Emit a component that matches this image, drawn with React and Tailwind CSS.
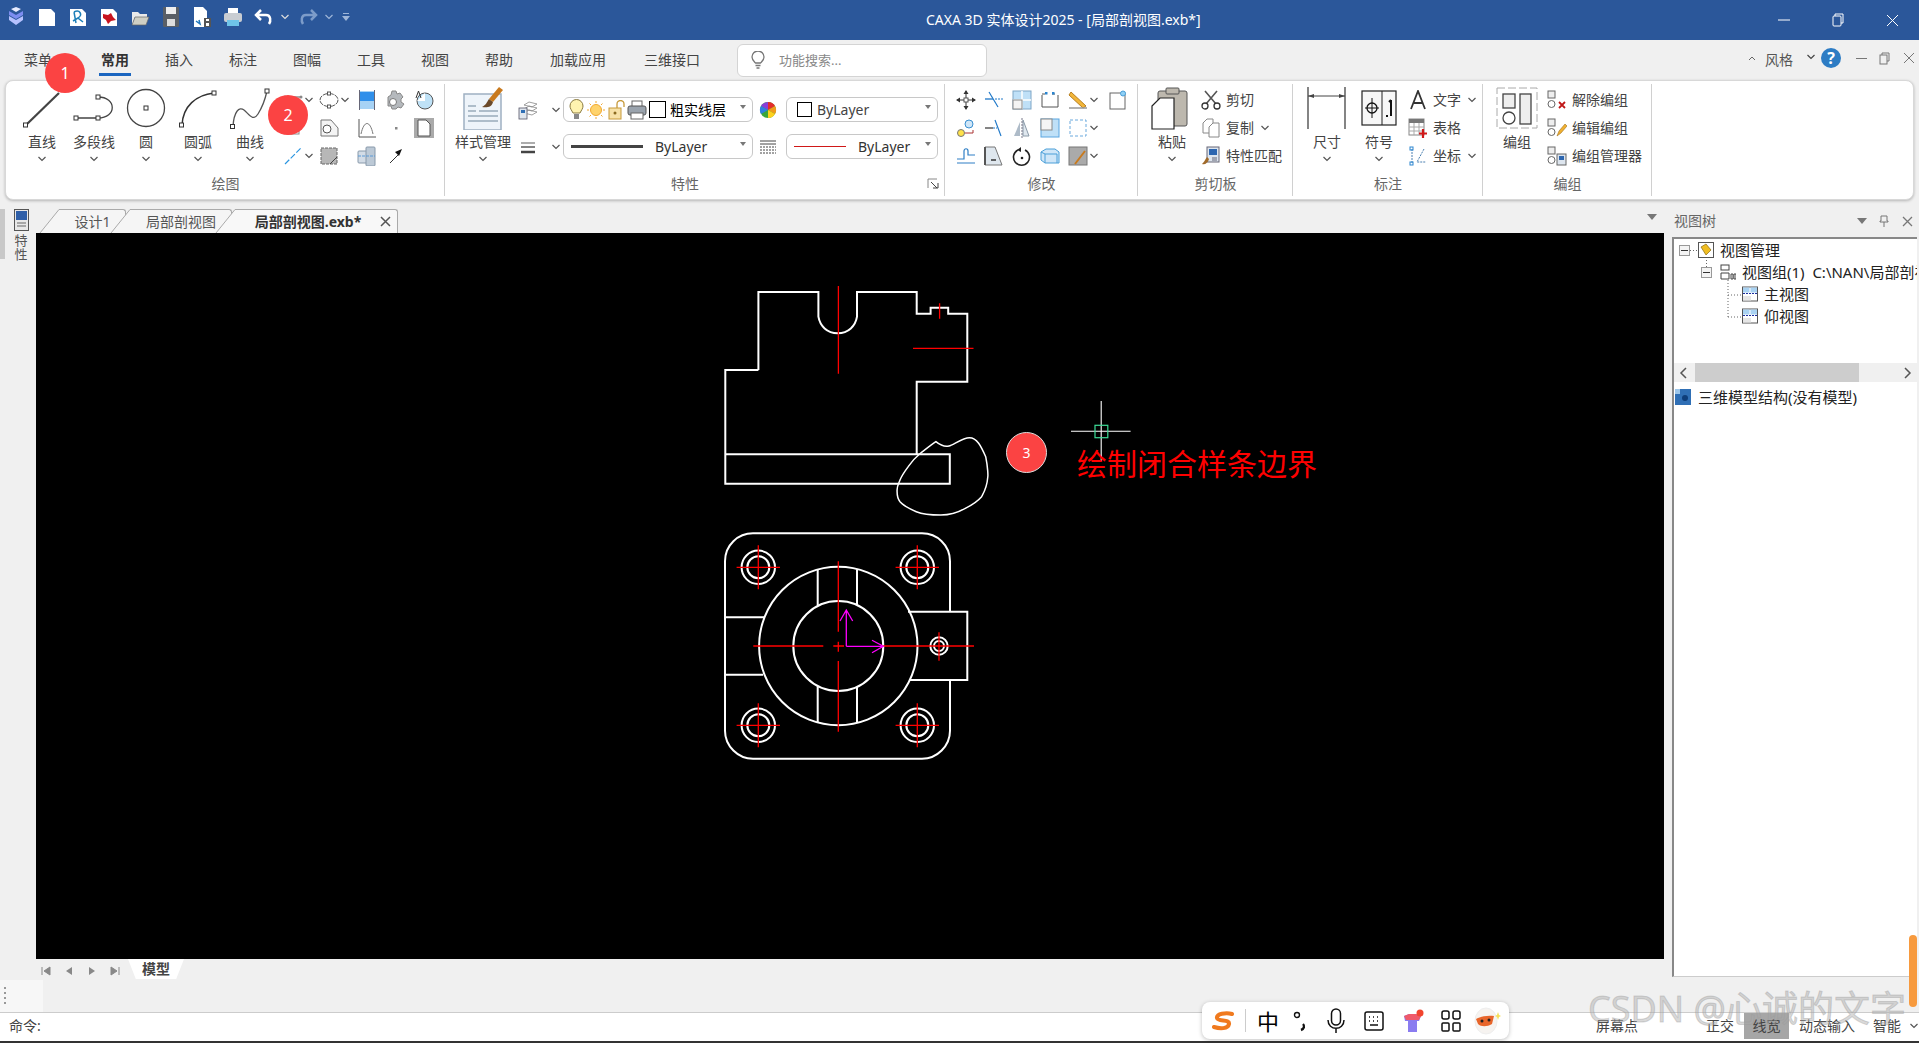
const Ic = ({ w = 20, h = 20, children }) => (
  <svg width={w} height={h} viewBox={`0 0 ${w} ${h}`} fill="none" className="shrink-0">{children}</svg>
)

const Chev = ({ c = '#555' }) => (
  <svg width="10" height="6" viewBox="0 0 10 6" fill="none" className="shrink-0"><path d="M1.5 1l3.5 3.5L8.500 1" stroke={c} strokeWidth="1.2" /></svg>
)

const Caret = () => <span className="w-0 h-0 border-x-[3.500px] border-x-transparent border-t-[4px] border-t-[#777] shrink-0" />

const Sq = ({ x, y, s = 4 }) => <rect x={x - s / 2} y={y - s / 2} width={s} height={s} fill="#fff" stroke="#333" strokeWidth="1" />

/* quick access icons */
const qat = [
  <Ic key="logo" w={20} h={22}><path d="M3 5l7 4 7-4v4l-7 4-7-4z" fill="#7c8df0" /><path d="M3 10l7 4 7-4v4l-7 5-7-5z" fill="#b6c2ff" /><path d="M5 3l5-2 5 2-5 3z" fill="#e8ecff" /></Ic>,
  <Ic key="new" w={20} h={22}><path d="M2 3h12l4 4v13H2z" fill="#fff" /></Ic>,
  <Ic key="exb" w={20} h={22}><path d="M2 3h12l4 4v13H2z" fill="#fff" /><path d="M6 6c6-3 9 3 4 6l5 4M6 6l2 11M10 12l-5 3" stroke="#1e7fb8" strokeWidth="1.500" /></Ic>,
  <Ic key="red" w={20} h={22}><path d="M2 3h12l4 4v13H2z" fill="#fff" /><path d="M4 8l5 1 3-2 2 4 3 3-5 1-3 3-2-4-3-2z" fill="#c8141e" /></Ic>,
  <Ic key="open" w={20} h={22}><path d="M2 6h6l2 2h7v3H5l-3 8z" fill="#e9e9e9" /><path d="M5 11h14l-3 8H2z" fill="#cfcfc4" stroke="#666" strokeWidth=".7" /></Ic>,
  <Ic key="save" w={20} h={22}><rect x="2" y="1" width="16" height="20" rx="1" fill="#5a5f66" /><rect x="5" y="1" width="10" height="7" fill="#eee" /><rect x="6" y="13" width="8" height="7" fill="#ddd" /></Ic>,
  <Ic key="saveas" w={20} h={22}><path d="M2 1h9l4 4v8h-3v8H2z" fill="#fff" /><path d="M4 15l4 3-1-4" stroke="#2277bb" strokeWidth="1.500" /><rect x="12" y="12" width="7" height="9" fill="#555" /><rect x="14" y="13" width="3" height="2" fill="#fff" /><rect x="14" y="17" width="3" height="3" fill="#fff" /></Ic>,
  <Ic key="print" w={20} h={22}><rect x="5" y="2" width="10" height="6" fill="#fff" /><rect x="1" y="7" width="18" height="9" rx="2" fill="#c9cdd2" /><rect x="4" y="14" width="12" height="6" fill="#6fc4e8" /></Ic>,
]

/* big ribbon icons, 44x44 */
const LineIc = () => <Ic w={44} h={44}><path d="M6 39L39 7" stroke="#444" strokeWidth="2.200" /><Sq x={5.500} y={39} /></Ic>
const PolyIc = () => <Ic w={44} h={44}><path d="M4 32h22c19 0 19-21 0-21" stroke="#444" strokeWidth="1.300" /><Sq x={4} y={32} /><Sq x={26} y={32} /><Sq x={26} y={11} /></Ic>
const CircleIc = () => <Ic w={44} h={44}><circle cx="22" cy="22" r="18.500" stroke="#444" strokeWidth="1.300" /><Sq x={22} y={22} /></Ic>
const ArcIc = () => <Ic w={44} h={44}><path d="M6 39C7 20 20 9 38 7" stroke="#333" strokeWidth="1.500" /><Sq x={5.500} y={39} /><Sq x={38} y={7} /></Ic>
const CurveIc = () => <Ic w={44} h={44}><path d="M5 40c1-14 6-20 11-16s9 12 14 4 7-14 9-23" stroke="#555" strokeWidth="1.300" /><Sq x={4.500} y={40.500} /><Sq x={39} y={5} /></Ic>
const StyleIc = () => <Ic w={44} h={44}><rect x="3" y="8" width="37" height="36" fill="#eef4fa" stroke="#9fb0c2" strokeWidth="1.500" /><path d="M7 20h8M7 25h8M7 30h30M7 35h30M18 25h19" stroke="#9ab" strokeWidth="1.300" /><path d="M38 1l4 3-10 12-4-3z" fill="#c97a1e" /><path d="M28 13l4 3c-1 5-6 6-11 5 4-2 5-5 7-8z" fill="#6b4a2a" /></Ic>
const PasteIc = () => <Ic w={44} h={44}><rect x="8" y="5" width="29" height="35" rx="2" fill="#bdb8ae" stroke="#555" /><rect x="16" y="2" width="13" height="6" rx="1" fill="#bdb8ae" stroke="#555" /><path d="M2 20l8-8h14v31H2z" fill="#fff" stroke="#222" strokeWidth="1.200" /></Ic>
const DimIc = () => <Ic w={44} h={44}><path d="M3 1v42M40 1v42" stroke="#444" strokeWidth="1.300" /><path d="M3 10h37" stroke="#444" /><path d="M3 10l6-2v4zM40 10l-6-2v4z" fill="#444" /></Ic>
const SymIc = () => <Ic w={44} h={44}><rect x="5" y="5" width="34" height="34" fill="#f7f7f7" stroke="#222" strokeWidth="1.200" /><path d="M25 5v34" stroke="#222" /><circle cx="15" cy="22" r="5" stroke="#111" strokeWidth="1.300" /><path d="M15 12v20M8 22h14" stroke="#111" /><path d="M29 30h2M34 14l-2 2M34 14v16" stroke="#111" strokeWidth="2" /></Ic>
const GroupIc = () => <Ic w={44} h={44}><rect x="2" y="2" width="40" height="40" stroke="#aaa" strokeDasharray="8 3" /><rect x="8" y="8" width="12" height="14" fill="#eee" stroke="#444" strokeWidth="1.300" /><circle cx="14" cy="32" r="6" fill="#fff" stroke="#444" strokeWidth="1.300" /><rect x="25" y="8" width="11" height="30" fill="#eee" stroke="#444" strokeWidth="1.300" /></Ic>

/* small ribbon icons, 20x20 */
const I = {
  rectLine: <Ic><path d="M2 7h16" stroke="#555" /><circle cx="2" cy="7" r="1.500" fill="#888" /><circle cx="18" cy="7" r="1.500" fill="#888" /></Ic>,
  ellipse: <Ic><ellipse cx="10" cy="10" rx="9" ry="6.500" stroke="#555" strokeDasharray="5 1" /><rect x="8.500" y="2" width="3" height="3" fill="#fff" stroke="#555" /><rect x="8.500" y="15" width="3" height="3" fill="#fff" stroke="#555" /></Ic>,
  blue: <Ic><rect x="2" y="1" width="16" height="18" fill="#a6d2f5" /><rect x="3" y="2" width="14" height="9" fill="#2f8fea" /><path d="M2.500 0v20M17.500 0v20" stroke="#667" /></Ic>,
  gear: <Ic><path d="M6 1h4l1 3 3-1 3 4-2 2v3l3 2-3 4-3-1-2 2H6l-1-3H2V7l3-2z" fill="#b5b9bd" stroke="#888" /><circle cx="7" cy="12" r="3.500" fill="#fff" stroke="#777" /></Ic>,
  aCirc: <Ic><circle cx="11" cy="11" r="8" fill="#bfe2f7" stroke="#555" /><path d="M11 3v8H3" fill="#fff" /><path d="M2 8l2.500-7L7 8" fill="none" stroke="#333" /></Ic>,
  blank: <Ic><rect x="4" y="4" width="12" height="12" stroke="#888" /></Ic>,
  penta: <Ic><path d="M2 2h10l7 8v8H2z" fill="#f4f4f4" stroke="#777" /><circle cx="8" cy="11" r="4" fill="#fff" stroke="#555" /></Ic>,
  axis: <Ic><path d="M2 1v18h17" stroke="#555" /><path d="M4 16c3-14 9-14 12 0" stroke="#777" /></Ic>,
  dot: <Ic><rect x="9" y="9" width="2.500" height="2.500" fill="#888" /></Ic>,
  page: <Ic><rect width="20" height="20" fill="#aaa" /><path d="M4 2h8l4 4v12H4z" fill="#fff" stroke="#555" /></Ic>,
  dash: <Ic><path d="M2 18L18 2" stroke="#2a95e0" strokeWidth="1.200" strokeDasharray="6 2" /></Ic>,
  hatch: <Ic><rect x="2" y="2" width="16" height="16" fill="#b7b7b7" stroke="#666" strokeDasharray="3 1" /><path d="M11 18l7-7" stroke="#444" /></Ic>,
  cyl: <Ic><rect x="1" y="5" width="9" height="12" rx="1" fill="#d3dce6" stroke="#89a" /><rect x="9" y="1" width="9" height="19" rx="1" fill="#bcc9d6" stroke="#89a" /><path d="M1 10h17" stroke="#5a9ad6" strokeDasharray="3 1" /></Ic>,
  arrow: <Ic><path d="M4 17l9-9" stroke="#333" /><path d="M16 3l-7 3 4 4z" fill="#111" /></Ic>,
  layers: <Ic><path d="M6 5l5-3 8 2-5 3zM6 9l5-3 8 2-5 3zM6 13l5-3 8 2-5 3z" fill="#fff" stroke="#888" strokeWidth=".8" /><rect x="1" y="8" width="8" height="11" fill="#dfe6ee" stroke="#556" strokeWidth=".8" /><rect x="3" y="10" width="4" height="3" fill="#2f6fb5" /></Ic>,
  weight: <Ic><path d="M3 6h14" stroke="#777" strokeWidth="1.200" /><path d="M3 10h14" stroke="#666" strokeWidth="1.600" /><path d="M3 15h14" stroke="#444" strokeWidth="2.500" /></Ic>,
  wheel: <Ic><circle cx="10" cy="10" r="8" fill="#3aa63a" /><path d="M10 10V2a8 8 0 0 1 7 4z" fill="#e52b2b" /><path d="M10 10l7-4a8 8 0 0 1 0 8z" fill="#f09a1a" /><path d="M10 10l7 4a8 8 0 0 1-7 4z" fill="#ffd21e" /><path d="M10 10V2a8 8 0 0 0-7 4z" fill="#8a3fd8" /><path d="M10 10L3 6a8 8 0 0 0 0 8z" fill="#2f7fe0" /></Ic>,
  lineType: <Ic><path d="M2 4h16M2 7h16" stroke="#444" /><path d="M2 10h16M2 13h16M2 16h16" stroke="#444" strokeDasharray="2 1" /></Ic>,
  move: <Ic><path d="M10 1v18M1 10h18" stroke="#333" /><path d="M10 0l-2.500 4h5zM10 20l-2.500-4h5zM0 10l4-2.500v5zM20 10l-4-2.500v5z" fill="#333" /><rect x="8" y="8" width="4" height="4" fill="#fff" stroke="#555" /></Ic>,
  trim: <Ic><path d="M1 9h8" stroke="#1f78c8" strokeWidth="1.300" /><path d="M11 9h8" stroke="#1f78c8" strokeDasharray="2 1" /><path d="M5 2l9 15" stroke="#1f78c8" strokeWidth="1.200" /></Ic>,
  array: <Ic><rect x="1" y="1" width="18" height="18" fill="#bfe0f7" stroke="#7fa6c6" /><path d="M10 1v18M1 10h18" stroke="#fff" strokeWidth="1.500" /><rect x="1" y="10" width="9" height="9" fill="#f4f4f4" stroke="#888" /></Ic>,
  rectT: <Ic><path d="M2 5v12h16V5" stroke="#555" /><path d="M2 4h16" stroke="#555" strokeDasharray="3 7" /><rect x="5" y="2" width="2.500" height="2.500" fill="#2a85d0" /><rect x="12" y="2" width="2.500" height="2.500" fill="#2a85d0" /></Ic>,
  pencil: <Ic><path d="M3 2l15 14-3 2L1 5z" fill="#f2b63a" stroke="#b87f20" /><path d="M1 18h18" stroke="#999" strokeWidth="1.500" /></Ic>,
  pageCorner: <Ic><rect x="3" y="3" width="15" height="16" fill="#fff" stroke="#666" /><circle cx="16" cy="3.500" r="2.500" fill="#8fd0f5" stroke="#4a9fd8" /></Ic>,
  offset: <Ic><circle cx="13" cy="6" r="4" fill="#cfe6f8" stroke="#3a8fd0" /><circle cx="5" cy="15" r="3.500" fill="#ffe14a" stroke="#777" /><path d="M9 15h8v-3" stroke="#a33" /></Ic>,
  extend: <Ic><path d="M1 10h8" stroke="#333" strokeWidth="1.200" /><path d="M9 10h4" stroke="#1f78c8" strokeDasharray="2 1" /><path d="M11 2l6 16" stroke="#1f78c8" strokeWidth="1.200" /></Ic>,
  mirror: <Ic><path d="M8 4v14H2z" fill="#aebbc8" /><path d="M11 2v16h6z" fill="#dfe7ee" stroke="#8a9aa8" /><path d="M10 0v20" stroke="#778" strokeDasharray="2 1" /></Ic>,
  fillRect: <Ic><rect x="1" y="1" width="18" height="18" fill="#bfe0f7" stroke="#5aa6e0" /><rect x="1" y="1" width="11" height="11" fill="#f5f5f5" stroke="#888" /></Ic>,
  dashRect: <Ic><rect x="2" y="2" width="16" height="16" fill="#fff" stroke="#6aa9dd" strokeDasharray="3 2" /></Ic>,
  hump: <Ic><path d="M1 17h18M1 13h7V5c0-3 4-3 4 0v4h7" stroke="#2f7fc6" strokeWidth="1.200" /></Ic>,
  taper: <Ic><path d="M1 1h10l7 18H1z" fill="#dfe7ee" stroke="#777" /><path d="M1 1v18" stroke="#555" strokeWidth="2" /><path d="M7 14h5" stroke="#333" strokeWidth="1.500" /></Ic>,
  rotate: <Ic><path d="M6 4a8 8 0 1 0 7 0" stroke="#222" strokeWidth="1.600" /><path d="M9 1l-4 3 4 2z" fill="#222" /><circle cx="10" cy="12" r="1.300" fill="#222" /></Ic>,
  box3: <Ic><path d="M1 6l5-3h9l4 3v11H5l-4-3z" fill="#cfe6f8" stroke="#4a9fd8" /><path d="M5 8h12v9M5 8v9M1 6l4 2" stroke="#4a9fd8" /></Ic>,
  stretch: <Ic><rect x="1" y="1" width="18" height="18" fill="#aaa" stroke="#777" /><path d="M7 18l10-13" stroke="#c97a1e" strokeWidth="2" /></Ic>,
  scissors: <Ic><path d="M4 1l11 13M16 1L5 14" stroke="#555" strokeWidth="1.600" /><circle cx="4" cy="16" r="3" fill="#fff" stroke="#333" strokeWidth="1.300" /><circle cx="16" cy="16" r="3" fill="#fff" stroke="#333" strokeWidth="1.300" /></Ic>,
  copy: <Ic><path d="M2 5l4-4h6v14H2z" fill="#fff" stroke="#888" /><path d="M8 9l4-4h6v14H8z" fill="#fff" stroke="#888" /></Ic>,
  match: <Ic><rect x="6" y="1" width="12" height="15" fill="#dde5ee" stroke="#667" /><rect x="8" y="3" width="8" height="6" fill="#2d66b0" /><path d="M11 12h5M11 14h5" stroke="#667" /><path d="M6 11l2 2c-1 4-4 6-7 5 2-2 3-4 5-7z" fill="#a06a2a" /></Ic>,
  bigA: <Ic><path d="M3 19L10 1l7 18M6 13h8" stroke="#333" strokeWidth="1.800" /></Ic>,
  table: <Ic><rect x="1" y="1" width="15" height="16" fill="#fff" stroke="#888" /><rect x="1" y="1" width="15" height="4" fill="#777" /><path d="M1 9h15M1 13h15M6 5v12M11 5v12" stroke="#aaa" /><path d="M15 11v9M11 15.500h8" stroke="#d01818" strokeWidth="2.200" /></Ic>,
  coord: <Ic><path d="M4 3v15M16 3l-7 13h9" stroke="#4a7fb0" strokeDasharray="2 1" /><rect x="2" y="1" width="3" height="3" stroke="#2a85d0" /><rect x="2" y="16" width="3" height="3" stroke="#2a85d0" /></Ic>,
  ungroup: <Ic><rect x="1" y="1" width="7" height="7" fill="#eee" stroke="#666" /><circle cx="4.500" cy="14" r="3.500" fill="#fff" stroke="#666" /><path d="M12 12l6 6M18 12l-6 6" stroke="#c01818" strokeWidth="1.800" /></Ic>,
  editg: <Ic><rect x="1" y="1" width="7" height="7" fill="#eee" stroke="#666" /><circle cx="4.500" cy="14" r="3.500" fill="#fff" stroke="#666" /><path d="M10 18l2-5 6-7 2 2-6 7z" fill="#f0b030" stroke="#a07020" strokeWidth=".6" /></Ic>,
  mgr: <Ic><rect x="1" y="1" width="7" height="7" fill="#eee" stroke="#666" /><circle cx="4.500" cy="14" r="3.500" fill="#fff" stroke="#666" /><rect x="10" y="8" width="9" height="11" fill="#dde5ee" stroke="#666" /><rect x="12" y="10" width="5" height="4" fill="#2d66b0" /></Ic>,
}

const BigBtn = ({ label, w = 'w-[52px]', chevron = true, children }) => (
  <div className={`flex flex-col items-center shrink-0 ${w}`}>
    <div className="h-11 flex items-center justify-center">{children}</div>
    <div className="mt-0.5 h-5 leading-5 text-sm text-[#444] whitespace-nowrap">{label}</div>
    <div className="h-3.5 flex items-center">{chevron && <Chev />}</div>
  </div>
)

const SmallRow = ({ icon, text, chevron }) => (
  <div className="flex items-center h-7">
    {icon}
    <span className="ml-[5px] text-sm text-[#444] whitespace-nowrap">{text}</span>
    {chevron && <span className="ml-1.5"><Chev /></span>}
  </div>
)

const Group = ({ width, label, children, extra }) => (
  <div className={`${width} shrink-0 h-full flex flex-col relative`}>
    <div className="h-[88px] mt-[5px] flex">{children}</div>
    <div className="h-5 leading-5 text-sm text-[#666] flex">
      {extra || <span className="w-full text-center">{label}</span>}
    </div>
    <div className="absolute right-0 top-[3px] bottom-[3px] w-px bg-[#d0d0d0]" />
  </div>
)

const Cell = ({ icon, chev }) => (
  <div className="flex items-center h-7">
    {icon}
    {chev && <span className="ml-px"><Chev /></span>}
  </div>
)

const Select = ({ w, children }) => (
  <div className={`${w} shrink-0 h-[25px] rounded-md border border-[#c8c8c8] bg-white flex items-center relative`}>{children}</div>
)

const ByLayerCaret = () => <span className="absolute right-[6px] top-[10px]"><Caret /></span>

const Tab = ({ label, active, w, close }) => (
  <div className={`flex h-6 shrink-0 ${w}`}>
    <svg width="21" height="24" viewBox="0 0 21 24" fill="none" className="shrink-0"><path d="M21 .5h-1L1 24h20z" fill={active ? '#f8f8f8' : '#f5f5f5'} /><path d="M21 .500h-1L1 24" stroke="#aaa" /></svg>
    <div className={`flex-1 flex items-center border-t border-r border-[#aaa] rounded-tr-[3px] text-sm ${active ? 'bg-[#f8f8f8] font-bold text-[#333]' : 'bg-[#f5f5f5] text-[#555]'}`}>
      <span className="flex-1 text-center whitespace-nowrap">{label}</span>
      {close && <span className="mr-[6px] text-[#555]"><svg width="11" height="11" viewBox="0 0 11 11"><path d="M1 1l9 9M10 1l-9 9" stroke="#555" strokeWidth="1.500" /></svg></span>}
    </div>
  </div>
)

const HoleCorner = ({ x, y }) => (
  <g>
    <circle cx={x} cy={y} r="16.700" stroke="#fff" strokeWidth="2" fill="none" />
    <circle cx={x} cy={y} r="11" stroke="#fff" strokeWidth="2" fill="none" />
    <path d={`M${x - 21.700} ${y}h43.400M${x} ${y - 22}v44`} stroke="#f00" strokeWidth="1.300" />
  </g>
)

const Drawing = () => (
  <svg className="absolute inset-0" width="1628" height="726" viewBox="36 233 1628 726" fill="none">
    <g stroke="#fff" strokeWidth="2">
      <path d="M758.400 370V292H818.400V316.700C820 326 827 333.300 837.700 333.300S855.500 326 857 316.700V292H916.700V313.700H930.600V307.700H948.200V313.700H967.300V381.700H916.700V454.300" />
      <path d="M758.400 370H725.300V483.700H949.800V454.300H725.300" />
      <path strokeWidth="1.500" d="M935.900 441.700C940 445 945 447 949 446S963 437.700 969.400 437.700C977 437.700 981 446 985.700 456.700C988 468 988 476 987.800 476.700C987 488 983 494 981.600 496.700C977 502 970 506 965.300 508.300C957 513 948 515 940.800 515C932 515 922 514 916.300 511.700C910 509 903 505 900 501.700C897 498 897 493 897.100 490C897 486 899 483 900 480C902 475 905 471 908.200 466.700C912 461 916 457 920.400 453.300C926 449 931 445 935.900 441.700Z" />
      <path d="M725 561.300C725 545 738 533.300 753 533.300H922C937 533.300 950 545 950 561.300V611.700M950 680V730.700C950 746 937 758.700 922 758.700H753C738 758.700 725 746 725 730.700V561.300" />
      <path d="M908 611.700H967.300V680H909M726 617.300H764M726 674.700H763" />
      <circle cx="838.300" cy="646" r="79.200" />
      <circle cx="838.300" cy="646" r="45" />
      <path d="M817.700 569.500V605M857 569.500V605M817.700 686.700V722.300M857 686.700V722.300" />
      <circle cx="939" cy="646" r="8.700" />
      <circle cx="939" cy="646" r="5" />
    </g>
    <g stroke="#f00" strokeWidth="1.300">
      <path d="M838.400 286V373.700M939.600 303.300V318.700M913 348.300H973.500" />
      <path d="M753.300 646H823.300M833.300 646H844M882.700 646H974M838.300 561.300V631.700M838.300 641.700V651.700M838.300 661V731.700M939 632.300V660.700" />
    </g>
    <HoleCorner x={758.300} y={567.300} />
    <HoleCorner x={917.300} y={567.300} />
    <HoleCorner x={758.300} y={725.300} />
    <HoleCorner x={917.300} y={725.300} />
    <path d="M846.300 646.300V610M840 621L846.300 610L852.700 621M846.300 646.300H883.300M872 640.300L883.300 646.300L872 652.700" stroke="#f0f" strokeWidth="1.300" />
    <path d="M1071 431.300H1130.600M1101.200 401V461" stroke="#fff" strokeWidth="1.100" />
    <rect x="1095" y="425.300" width="12.800" height="12.400" stroke="#3ddc97" strokeWidth="1.200" />
  </svg>
)

const Badge = ({ n, pos }) => (
  <div className={`absolute ${pos} w-10 h-10 rounded-full bg-[#fb4343] text-white text-base flex items-center justify-center z-10`}>{n}</div>
)

const TreeRow = ({ pl, icon, text, boxed }) => (
  <div className={`flex items-center h-[22px] whitespace-pre ${pl}`}>
    {boxed && <span className="w-[11px] h-[11px] mr-2 border border-[#999] bg-[#f4f4f4] flex items-center justify-center shrink-0"><span className="w-[7px] h-px bg-[#333]" /></span>}
    {icon}
    <span className="ml-[6px] text-[15px] text-[#222]">{text}</span>
  </div>
)

const ViewIc = () => <svg width="16" height="16" viewBox="0 0 16 16" fill="none" className="shrink-0"><rect x="0.500" y="1" width="15" height="14" fill="#fff" stroke="#555" /><rect x="1" y="1.500" width="6.500" height="5" fill="#a9d2f2" /><rect x="8.500" y="1.500" width="6.500" height="5" fill="#a9d2f2" /><path d="M1 7.500h14" stroke="#1c2fa0" strokeDasharray="2 1" /><rect x="1" y="10" width="8" height="4.500" fill="#e6e6e6" /></svg>

export default function App() {
  return (
    <div className="relative w-[1919px] h-[1043px] overflow-hidden bg-[#f0f0f0] font-['Noto_Sans','Noto_Sans_CJK_SC',sans-serif] text-[#444]">
      {/* title bar */}
      <div className="h-10 bg-[#2b579a] flex items-center relative">
        <div className="flex items-center pb-1.5">
          {qat.map((q, i) => <div key={i} className="w-[31px] flex justify-center">{q}</div>)}
          <svg width="20" height="18" viewBox="0 0 20 18" fill="none" className="ml-[6px]"><path d="M7 2L2 7l5 5M3 7h9c5 0 5 6 3 9" stroke="#fff" strokeWidth="2.500" /></svg>
          <span className="ml-[6px]"><Chev c="#ddd" /></span>
          <svg width="20" height="18" viewBox="0 0 20 18" fill="none" className="ml-[8px]"><path d="M13 2l5 5-5 5M17 7H8c-5 0-5 6-3 9" stroke="#7d9cc9" strokeWidth="2.500" /></svg>
          <span className="ml-[6px]"><Chev c="#9fb6d8" /></span>
          <svg width="8" height="10" viewBox="0 0 8 10" className="ml-[8px]"><path d="M1 1h6v1H1zM0 4h8L4 9z" fill="#9fb6d8" /></svg>
        </div>
        <span className="absolute left-[926px] text-sm text-white whitespace-nowrap">CAXA 3D 实体设计2025 - [局部剖视图.exb*]</span>
        <div className="ml-auto flex items-center gap-[42px] pr-[20px]">
          <svg width="12" height="12" viewBox="0 0 12 12"><path d="M0 6h12" stroke="#fff" /></svg>
          <svg width="12" height="14" viewBox="0 0 12 14" fill="none"><rect x="1" y="3" width="8" height="10" rx="1" stroke="#fff" /><path d="M3 3V1h8v9H9" stroke="#fff" /></svg>
          <svg width="13" height="13" viewBox="0 0 13 13"><path d="M1 1l11 11M12 1L1 12" stroke="#fff" /></svg>
        </div>
      </div>

      {/* menu row */}
      <div className="h-10 flex items-center relative text-sm">
        <span className="ml-[24px] w-7 whitespace-nowrap">菜单</span>
        <div className="ml-[47px] w-8 h-10 flex flex-col items-center justify-center relative font-bold text-[#333]">
          常用
          <span className="absolute bottom-[4px] inset-x-0 h-[3px] bg-[#1b66c0]" />
        </div>
        <span className="ml-[34px]">插入</span>
        <span className="ml-9">标注</span>
        <span className="ml-9">图幅</span>
        <span className="ml-9">工具</span>
        <span className="ml-9">视图</span>
        <span className="ml-9">帮助</span>
        <span className="ml-[37px]">加载应用</span>
        <span className="ml-[38px]">三维接口</span>
        <div className="ml-[37px] w-[250px] h-[33px] bg-white rounded-md border border-[#d4d4d4] flex items-center">
          <svg width="14" height="18" viewBox="0 0 14 18" fill="none" className="ml-[13px]"><path d="M4.500 12C3 10.500 1 9 1 6a6 6 0 0 1 12 0c0 3-2 4.500-3.500 6z" stroke="#777" strokeWidth="1.300" /><path d="M4.500 14.500h5M5.500 17h3" stroke="#777" strokeWidth="1.300" /></svg>
          <span className="ml-[14px] text-[13px] text-[#888]">功能搜索...</span>
        </div>
        <div className="ml-auto flex items-center pr-[4px]">
          <svg width="8" height="6" viewBox="0 0 8 6" fill="none" className="mb-1"><path d="M1 5l3-3 3 3" stroke="#666" /></svg>
          <span className="ml-[9px] text-[#555]">风格</span>
          <span className="ml-[13px] mb-1.5"><Chev c="#444" /></span>
          <span className="ml-[5px] w-5 h-5 mb-1 rounded-full bg-[#2d7cc4] text-white font-bold flex items-center justify-center text-[16px]">?</span>
          <svg width="11" height="11" viewBox="0 0 11 11" className="ml-[15px] mb-1"><path d="M0 5.500h11" stroke="#777" /></svg>
          <svg width="11" height="13" viewBox="0 0 11 13" fill="none" className="ml-[12px] mb-1"><rect x="1" y="3" width="7" height="9" stroke="#777" /><path d="M3 3V1h7v8H8" stroke="#777" /></svg>
          <svg width="12" height="12" viewBox="0 0 12 12" className="ml-[13px] mb-1"><path d="M1 1l10 10M11 1L1 11" stroke="#777" /></svg>
        </div>
      </div>

      {/* ribbon */}
      <div className="ml-[5px] w-[1909px] h-[120px] bg-white rounded-lg border border-[#d8d8d8] shadow-[0_1px_3px_rgba(0,0,0,0.25)] flex">
        <Group width="w-[439px]" label="绘图">
          <div className="flex pl-[10px]">
            <BigBtn label="直线"><LineIc /></BigBtn>
            <BigBtn label="多段线"><PolyIc /></BigBtn>
            <BigBtn label="圆"><CircleIc /></BigBtn>
            <BigBtn label="圆弧"><ArcIc /></BigBtn>
            <BigBtn label="曲线"><CurveIc /></BigBtn>
          </div>
          <div className="ml-[7px] grid grid-cols-[36px_38px_29px_28px_28px] grid-rows-[28px_28px_28px]">
            <Cell icon={I.rectLine} chev /><Cell icon={I.ellipse} chev /><Cell icon={I.blue} /><Cell icon={I.gear} /><Cell icon={I.aCirc} />
            <Cell icon={I.blank} /><Cell icon={I.penta} /><Cell icon={I.axis} /><Cell icon={I.dot} /><Cell icon={I.page} />
            <Cell icon={I.dash} chev /><Cell icon={I.hatch} /><Cell icon={I.cyl} /><Cell icon={I.arrow} />
          </div>
        </Group>

        <Group width="w-[500px]" extra={<><span className="w-[480px] text-center">特性</span><svg width="12" height="12" viewBox="0 0 12 12" fill="none" className="ml-[2px] mt-1"><path d="M1 10V1h9" stroke="#888" /><path d="M4 4l6 6M6 10h5V5" stroke="#444" /></svg></>}>
          <div className="pl-[3px]">
            <BigBtn label="样式管理" w="w-[70px]"><StyleIc /></BigBtn>
          </div>
          <div className="flex flex-col gap-3 pt-[11px]">
            <div className="flex items-center">
              {I.layers}
              <span className="ml-[13px]"><Chev /></span>
              <div className="ml-[2px]"><Select w="w-[190px]">
                <svg width="15" height="21" viewBox="0 0 15 21" fill="none" className="ml-[5px]"><path d="M4 14C2.500 11 1 9.500 1 7a6.500 6.500 0 0 1 13 0c0 2.500-1.500 4-3 7z" fill="#fff3b0" stroke="#8a7a40" /><rect x="5" y="15" width="5" height="5" fill="#888" /></svg>
                <svg width="18" height="18" viewBox="0 0 18 18" fill="none" className="ml-[3px]"><circle cx="9" cy="9" r="5.500" fill="#ffd36b" stroke="#f0a830" /><path d="M9 0v2M9 16v2M0 9h2M16 9h2M2.500 2.500L4 4M14 14l1.500 1.500M2.500 15.500L4 14M14 4l1.500-1.500" stroke="#f0a830" /></svg>
                <svg width="18" height="20" viewBox="0 0 18 20" fill="none" className="ml-[3px]"><rect x="1" y="8" width="12" height="11" fill="#f7e2a8" stroke="#c79a3a" /><path d="M9 8V4a3.500 3.500 0 0 1 7 0v3" stroke="#c79a3a" strokeWidth="1.300" /><circle cx="7" cy="13" r="1.500" fill="#8a6a20" /></svg>
                <svg width="20" height="20" viewBox="0 0 20 20" className="ml-[1px]"><rect x="5" y="1" width="10" height="6" fill="#fff" stroke="#666" /><rect x="1" y="6" width="18" height="9" rx="2" fill="#9aa3ad" stroke="#555" /><rect x="4" y="13" width="12" height="6" fill="#fff" stroke="#666" /></svg>
                <span className="ml-[2px] w-[17px] h-[17px] border border-black bg-white shrink-0" />
                <span className="ml-1 text-sm text-black whitespace-nowrap">粗实线层</span>
                <ByLayerCaret />
              </Select></div>
              <span className="ml-[5px]">{I.wheel}</span>
              <div className="ml-2"><Select w="w-[152px]">
                <span className="ml-[10px] w-[15px] h-[15px] border border-black bg-white shrink-0" />
                <span className="ml-[5px] text-sm text-[#444]">ByLayer</span>
                <ByLayerCaret />
              </Select></div>
            </div>
            <div className="flex items-center">
              {I.weight}
              <span className="ml-[13px]"><Chev /></span>
              <div className="ml-[2px]"><Select w="w-[190px]">
                <span className="ml-[7px] w-[72px] h-[2.500px] bg-[#444] shrink-0" />
                <span className="ml-3 text-sm text-[#333]">ByLayer</span>
                <ByLayerCaret />
              </Select></div>
              <span className="ml-[5px]">{I.lineType}</span>
              <div className="ml-2"><Select w="w-[152px]">
                <span className="ml-[7px] w-[52px] h-px bg-[#d01818] shrink-0" />
                <span className="ml-3 text-sm text-[#333]">ByLayer</span>
                <ByLayerCaret />
              </Select></div>
            </div>
          </div>
        </Group>

        <Group width="w-[193px]" label="修改">
          <div className="ml-[11px] grid grid-cols-[28px_28px_28px_28px_39px_28px] grid-rows-[28px_28px_28px] justify-items-start">
            <Cell icon={I.move} /><Cell icon={I.trim} /><Cell icon={I.array} /><Cell icon={I.rectT} /><Cell icon={I.pencil} chev /><Cell icon={I.pageCorner} />
            <Cell icon={I.offset} /><Cell icon={I.extend} /><Cell icon={I.mirror} /><Cell icon={I.fillRect} /><Cell icon={I.dashRect} chev /><span />
            <Cell icon={I.hump} /><Cell icon={I.taper} /><Cell icon={I.rotate} /><Cell icon={I.box3} /><Cell icon={I.stretch} chev />
          </div>
        </Group>

        <Group width="w-[155px]" label="剪切板">
          <div className="pl-2"><BigBtn label="粘贴"><PasteIc /></BigBtn></div>
          <div className="ml-[3px]">
            <SmallRow icon={I.scissors} text="剪切" />
            <SmallRow icon={I.copy} text="复制" chevron />
            <SmallRow icon={I.match} text="特性匹配" />
          </div>
        </Group>

        <Group width="w-[190px]" label="标注">
          <div className="pl-[8px] flex">
            <BigBtn label="尺寸"><DimIc /></BigBtn>
            <BigBtn label="符号"><SymIc /></BigBtn>
          </div>
          <div className="ml-[3px]">
            <SmallRow icon={I.bigA} text="文字" chevron />
            <SmallRow icon={I.table} text="表格" />
            <SmallRow icon={I.coord} text="坐标" chevron />
          </div>
        </Group>

        <Group width="w-[169px]" label="编组">
          <div className="pl-2"><BigBtn label="编组" chevron={false}><GroupIc /></BigBtn></div>
          <div className="ml-[4px]">
            <SmallRow icon={I.ungroup} text="解除编组" />
            <SmallRow icon={I.editg} text="编辑编组" />
            <SmallRow icon={I.mgr} text="编组管理器" />
          </div>
        </Group>
      </div>

      {/* work area */}
      <div className="flex h-[812px]">
        <div className="w-9 shrink-0 flex flex-col">
          <div className="mt-[9px] flex">
            <div className="w-[5px] h-[50px] bg-[#c8c8c8]" />
            <div className="ml-[9px] flex flex-col items-center">
              <svg width="15" height="22" viewBox="0 0 15 22"><rect x=".5" y=".5" width="14" height="21" fill="#e8e8e8" stroke="#555" /><rect x="2" y="2" width="11" height="9" fill="#2f5fa8" /><path d="M3 14h9M3 17h9" stroke="#666" /></svg>
              <span className="mt-0.5 text-[13px] leading-[14px] w-[14px] text-[#555]">特性</span>
            </div>
          </div>
          <div className="mt-auto w-[43px] h-8 bg-[#f7f7f7] relative z-10 pl-1 pt-[7px] flex flex-col gap-[3px]">
            <span className="w-0.5 h-0.5 bg-[#999]" /><span className="w-0.5 h-0.5 bg-[#999]" /><span className="w-0.5 h-0.5 bg-[#999]" /><span className="w-0.5 h-0.5 bg-[#999]" />
          </div>
        </div>

        <div className="w-[1628px] shrink-0 flex flex-col">
          <div className="h-[33px] pt-[9px] flex items-start relative pl-[3px]">
            <Tab label="设计1" w="w-[87px]" />
            <Tab label="局部剖视图" w="w-[122px] -ml-[16px]" />
            <Tab label="局部剖视图.exb*" w="w-[183px] -ml-[17px]" active close />
            <span className="absolute right-[7px] top-[14px] w-0 h-0 border-x-[5px] border-x-transparent border-t-[6px] border-t-[#777]" />
          </div>
          <div className="relative h-[726px] bg-black">
            <Drawing />
            <div className="absolute left-[970px] top-[199px] w-[41px] h-[41px] rounded-full bg-[#fb4343] border border-[#ddd] text-white text-sm flex items-center justify-center">3</div>
            <div className="absolute left-[1041px] top-[212px] text-[30px] leading-[38px] text-[#f00] whitespace-nowrap">绘制闭合样条边界</div>
          </div>
          <div className="h-[21px] flex items-start">
            <div className="flex items-center gap-[13px] pl-[5px] h-6 w-[92px]">
              <svg width="10" height="10" viewBox="0 0 10 10"><path d="M1 1v8M9 1v8L3 5z" stroke="#888" fill="#888" /></svg>
              <svg width="10" height="10" viewBox="0 0 10 10"><path d="M8 1v8L2 5z" fill="#888" /></svg>
              <svg width="10" height="10" viewBox="0 0 10 10"><path d="M2 1v8l6-4z" fill="#888" /></svg>
              <svg width="10" height="10" viewBox="0 0 10 10"><path d="M9 1v8M1 1v8l6-4z" stroke="#888" fill="#888" /></svg>
            </div>
            <div className="w-[56px] h-5 bg-white text-sm font-bold text-[#444] text-center leading-5 [clip-path:polygon(0_0,100%_0,86%_100%,14%_100%)]">模型</div>
          </div>
        </div>

        <div className="flex-1 min-w-0 pl-2 pr-0.5 flex flex-col">
          <div className="h-[37px] pt-[5px] flex items-center text-sm text-[#666]">
            <span className="ml-0.5">视图树</span>
            <span className="ml-auto w-0 h-0 border-x-[5px] border-x-transparent border-t-[6px] border-t-[#777]" />
            <svg width="10" height="12" viewBox="0 0 10 12" className="ml-[12px]"><path d="M2 1h6v5h1v1H1V6h1zM5 7v5" stroke="#777" fill="none" /></svg>
            <svg width="11" height="11" viewBox="0 0 11 11" className="ml-[13px] mr-[4px]"><path d="M1 1l9 9M10 1l-9 9" stroke="#777" strokeWidth="1.300" /></svg>
          </div>
          <div className="h-[740px] bg-white border-l-2 border-t-2 border-[#888] border-b border-b-[#ccc] overflow-hidden relative">
            <svg width="90" height="90" viewBox="0 0 90 90" fill="none" className="absolute left-0 top-0"><path d="M16 11.500h8M32.500 21v7M54 41v37M54 56h14M54 78h14" stroke="#666" strokeDasharray="1 2" /></svg>
            <div className="relative">
              <TreeRow pl="pl-[5px]" boxed text="视图管理" icon={<svg width="16" height="16" viewBox="0 0 16 16" className="shrink-0"><rect x=".5" y=".5" width="15" height="15" fill="#fff" stroke="#555" /><path d="M3 5l5-3 5 6-5 5z" fill="#f0bd20" stroke="#8a6a10" strokeWidth=".7" /></svg>} />
              <TreeRow pl="pl-[27px]" boxed text="视图组(1)  C:\NAN\局部剖视图.exb" icon={<svg width="16" height="16" viewBox="0 0 16 16" fill="none" className="shrink-0"><rect x="1" y="1" width="8" height="5" stroke="#444" /><path d="M1 9h8v6H1zM11 10h2v5h-2zM14 10h2v5h-2z" stroke="#444" /></svg>} />
              <TreeRow pl="pl-[68px]" text="主视图" icon={<ViewIc />} />
              <TreeRow pl="pl-[68px]" text="仰视图" icon={<ViewIc />} />
            </div>
            <div className="mt-[36px] h-[19px] bg-[#f0f0f0] flex items-center">
              <svg width="9" height="12" viewBox="0 0 9 12" fill="none" className="ml-[5px]"><path d="M7 1L2 6l5 5" stroke="#555" strokeWidth="1.500" /></svg>
              <div className="ml-[7px] w-[164px] h-[19px] bg-[#cdcdcd]" />
              <svg width="9" height="12" viewBox="0 0 9 12" fill="none" className="ml-[44px]"><path d="M2 1l5 5-5 5" stroke="#555" strokeWidth="1.500" /></svg>
            </div>
            <div className="flex items-center h-[30px] pl-px">
              <svg width="16" height="16" viewBox="0 0 16 16" className="shrink-0"><rect width="16" height="16" fill="#2f6fb5" /><rect x="0" y="0" width="5" height="5" fill="#9cc6ea" /><circle cx="10" cy="9" r="3" fill="#0e3e7a" /></svg>
              <span className="ml-[7px] text-[15px] text-[#222] whitespace-nowrap">三维模型结构(没有模型)</span>
            </div>
          </div>
        </div>
      </div>

      {/* status bar */}
      <div className="h-[29px] pb-0.5 bg-white border-t border-[#ccc] flex items-center text-sm text-[#444]">
        <span className="pl-[9px]">命令:</span>
        <span className="ml-auto mr-[68px]">屏幕点</span>
        <span>正交</span>
        <span className="ml-[10px] w-[45px] h-[26px] bg-[#a6a6a6] text-center leading-[26px]">线宽</span>
        <span className="ml-[10px]">动态输入</span>
        <span className="ml-[18px]">智能</span>
        <span className="ml-2"><Chev /></span>
      </div>
      <div className="h-0.5 bg-[#333]" />

      {/* overlays */}
      <Badge n="1" pos="left-[45px] top-[53px]" />
      <Badge n="2" pos="left-[268px] top-[95px]" />

      <div className="absolute left-[1202px] top-[1002px] w-[307px] h-[37px] rounded-lg bg-white shadow-[0_1px_4px_rgba(0,0,0,0.25)] flex items-center z-20">
        <svg width="24" height="20" viewBox="0 0 24 20" fill="none" className="ml-[9px]"><path d="M21 3C15 1 5 3 6 7s13 1 12 6-9 5-15 3" stroke="#f07a1e" strokeWidth="4" strokeLinecap="round" /></svg>
        <span className="ml-[10px] w-px h-[23px] bg-[#ccc]" />
        <span className="ml-[11px] text-[22px] leading-none text-black w-[22px]">中</span>
        <svg width="14" height="24" viewBox="0 0 14 24" fill="none" className="ml-[14px]"><circle cx="4" cy="6" r="2.500" stroke="#111" strokeWidth="1.400" /><path d="M10 15c2 2 1 5-2 6" stroke="#111" strokeWidth="2.400" /></svg>
        <svg width="20" height="26" viewBox="0 0 20 26" fill="none" className="ml-[19px]"><rect x="5.500" y="1" width="9" height="16" rx="4.500" stroke="#111" strokeWidth="1.500" /><path d="M2 12c0 11 16 11 16 0M10 21v4" stroke="#111" strokeWidth="1.500" /></svg>
        <svg width="20" height="20" viewBox="0 0 20 20" fill="none" className="ml-[18px]"><rect x="1" y="1" width="18" height="18" rx="2" stroke="#111" strokeWidth="1.500" /><path d="M5 6h1M9 6h1M13 6h1M5 10h1M9 10h1M13 10h1M6 14h8" stroke="#111" strokeWidth="1.500" /></svg>
        <svg width="22" height="24" viewBox="0 0 22 24" className="ml-[18px]"><path d="M2 7l5-2h7l5 2-2 5h-2v11H6V12H3z" fill="#8a7cf0" /><path d="M2 7l5-2h7l5 2-2 4H4z" fill="#ef5a6a" /><circle cx="18" cy="4" r="3.500" fill="#f2452e" /></svg>
        <svg width="20" height="22" viewBox="0 0 20 22" fill="none" className="ml-[17px]"><rect x="1" y="1" width="7" height="8" rx="2" stroke="#111" strokeWidth="1.500" /><rect x="12" y="1" width="7" height="8" rx="2" stroke="#111" strokeWidth="1.500" /><rect x="1" y="13" width="7" height="8" rx="1" stroke="#111" strokeWidth="1.500" /><rect x="12" y="13" width="7" height="8" rx="1" stroke="#111" strokeWidth="1.500" /></svg>
        <svg width="28" height="30" viewBox="0 0 28 30" className="ml-[12px]"><ellipse cx="13" cy="15" rx="11" ry="13" fill="#f6f3f0" stroke="#eee" /><path d="M3 13c5-3 13-4 18-3l-2 8c-5 3-11 3-14 0z" fill="#e8652a" /><circle cx="9" cy="15" r="1.500" fill="#222" /><circle cx="16" cy="14" r="1.500" fill="#222" /><path d="M25 6l1 3 2 1-2 1-1 3-1-3-2-1 2-1z" fill="#f5df5a" /></svg>
      </div>

      <div className="absolute left-[1909px] top-[935px] w-2 h-[72px] rounded-full bg-[#f79a3e] z-20" />
      <div className="absolute left-[1588px] top-[987px] text-[36px] leading-[44px] whitespace-nowrap text-[rgba(170,170,170,0.45)] [-webkit-text-stroke:1px_rgba(150,150,150,0.35)] z-30">CSDN @心诚的文字</div>
    </div>
  )
}
